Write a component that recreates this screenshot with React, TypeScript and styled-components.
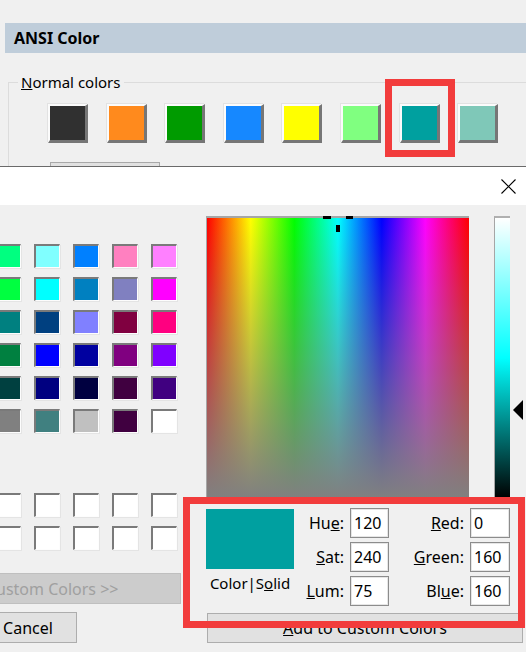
import React from 'react'
import styled, { createGlobalStyle } from 'styled-components'

const GlobalStyle = createGlobalStyle`
  html, body {
    margin: 0;
    padding: 0;
    background: #f0f0f0;
  }
  body {
    width: 526px;
    height: 652px;
    overflow: hidden;
    font-family: "Noto Sans", "Open Sans", sans-serif;
    color: #000;
  }
`

const Screen = styled.div`
  position: relative;
  width: 526px;
  height: 652px;
  overflow: hidden;
`

/* ---------- settings page behind the dialog ---------- */

const SettingsPage = styled.div`
  height: 166px;
  box-sizing: border-box;
  padding-top: 23px;
  overflow: hidden;
  background: #f0f0f0;
`

const SectionHeader = styled.div`
  margin-left: 5px;
  height: 30px;
  line-height: 30px;
  padding-left: 9px;
  background: #bfcdda;
  font-size: 16px;
  font-weight: 700;
`

const GroupBox = styled.fieldset`
  margin: 19px 0 0 8px;
  padding: 0;
  min-width: 0;
  height: 200px;
  border: 1px solid #dcdcdc;
  border-right: none;
`

const GroupLegend = styled.legend`
  margin-left: 9px;
  padding: 0 3px;
  font-size: 15px;
  line-height: 20px;
`

const SwatchRow = styled.div`
  display: flex;
  gap: 18.6px;
  margin: 12px 0 0 39px;
`

const RaisedSwatch = styled.div<{ $color: string }>`
  width: 40px;
  height: 39px;
  box-sizing: border-box;
  background: ${p => p.$color};
  border-style: solid;
  border-width: 2px 3px 3px 2px;
  border-color: #fbfbfb #767676 #767676 #fbfbfb;
  box-shadow: -1px -1px 0 #e2e2e2;
`

const PageButton = styled.div`
  margin: 19px 0 0 41px;
  width: 108px;
  height: 28px;
  background: #e1e1e1;
  border: 1px solid #a8a8a8;
`

/* ---------- colour dialog ---------- */

const Dialog = styled.div`
  border-top: 1px solid #6a6a6a;
  background: #f0f0f0;
  height: 485px;
`

const TitleBar = styled.div`
  height: 38px;
  background: #fff;
  display: flex;
  justify-content: flex-end;
  align-items: center;
  padding-right: 10px;
`

const DialogBody = styled.div`
  display: flex;
  align-items: flex-start;
`

const LeftPanel = styled.div`
  flex: none;
  width: 311px;
  margin-left: -130px;
  padding-top: 39px;
  display: flex;
  flex-direction: column;
`

const CellGrid = styled.div<{ $top?: number }>`
  display: grid;
  grid-template-columns: repeat(8, 26px);
  grid-auto-rows: 24px;
  column-gap: 13px;
  row-gap: 9px;
  padding-left: 8px;
  margin-top: ${p => p.$top ?? 0}px;
`

const SunkenCell = styled.div<{ $color: string }>`
  box-sizing: border-box;
  background: ${p => p.$color};
  border-style: solid;
  border-width: 2px 1px 1px 2px;
  border-color: #7a7a7a #fdfdfd #fdfdfd #7a7a7a;
  box-shadow: 1px 1px 0 #e4e4e4;
`

const WideButton = styled.div<{ $disabled?: boolean }>`
  margin-top: 23px;
  height: 31px;
  box-sizing: border-box;
  display: flex;
  align-items: center;
  justify-content: center;
  font-size: 16px;
  white-space: nowrap;
  background: ${p => (p.$disabled ? '#cccccc' : '#e1e1e1')};
  border: 1px solid ${p => (p.$disabled ? '#bfbfbf' : '#adadad')};
  color: ${p => (p.$disabled ? '#a0a0a0' : '#000')};
`

const ButtonRow = styled.div`
  display: flex;
  gap: 8px;
  margin-top: 8px;
  padding-left: 3px;
`

const PushButton = styled.div`
  width: 98px;
  height: 31px;
  box-sizing: border-box;
  display: flex;
  align-items: center;
  justify-content: center;
  font-size: 16px;
  background: #e1e1e1;
  border: 1px solid #adadad;
`

const RightPanel = styled.div`
  margin-left: 25px;
  padding-top: 11px;
  display: flex;
  flex-direction: column;
`

const PickerRow = styled.div`
  display: flex;
  align-items: flex-start;
`

const Spectrum = styled.div`
  position: relative;
  width: 263px;
  height: 282px;
  box-sizing: border-box;
  border-top: 2px solid #a6a6a6;
  border-left: 1px solid #a6a6a6;
  background:
    linear-gradient(to bottom, rgba(128, 128, 128, 0), #808080),
    linear-gradient(to right, #ff0000, #ffff00 16.67%, #00ff00 33.33%, #00ffff 50%, #0000ff 66.67%, #ff00ff 83.33%, #ff0000);
`

const Crosshair = styled.svg`
  position: absolute;
  top: -2px;
  width: 30px;
  height: 16px;
`

const LumBar = styled.div`
  margin-left: 25px;
  width: 16px;
  height: 282px;
  box-sizing: border-box;
  border-top: 2px solid #b0b0b0;
  border-left: 1px solid #a6a6a6;
  background: linear-gradient(to bottom, #ffffff, #00ffff 50%, #000000);
`

const LumTrack = styled.div`
  position: relative;
  width: 13px;
  height: 282px;
`

const LumArrow = styled.svg`
  position: absolute;
  left: 3px;
  width: 10px;
  height: 20px;
`

const ControlsRow = styled.div`
  display: flex;
  margin-top: 10px;
`

const PreviewBlock = styled.div`
  width: 88px;
  display: flex;
  flex-direction: column;
  align-items: center;
`

const PreviewSwatch = styled.div<{ $color: string }>`
  margin-top: 1px;
  width: 88px;
  height: 60px;
  background: ${p => p.$color};
`

const PreviewLabel = styled.div`
  margin-top: 4px;
  font-size: 15px;
  line-height: 20px;
  white-space: nowrap;
`

const FieldGrid = styled.div`
  display: grid;
  grid-template-columns: 44px 39px 69px 40px;
  grid-auto-rows: 30px;
  column-gap: 6px;
  row-gap: 4px;
  margin-left: 6px;
`

const FieldLabel = styled.div`
  display: flex;
  align-items: center;
  justify-content: flex-end;
  font-size: 16px;
  white-space: nowrap;
`

const FieldBox = styled.div`
  box-sizing: border-box;
  display: flex;
  align-items: center;
  padding-left: 3px;
  font-size: 16px;
  background: #fff;
  border: 1px solid #8c8c8c;
  box-shadow: inset 0 0 0 1px #e6e6e6;
`

const AddButton = styled.div`
  margin: 7px 0 0 1px;
  width: 316px;
  height: 30px;
  box-sizing: border-box;
  display: flex;
  align-items: center;
  justify-content: center;
  font-size: 16px;
  background: #e1e1e1;
  border: 1px solid #adadad;
`

/* ---------- red annotation frames ---------- */

const Highlight = styled.div<{ $x: number; $y: number; $w: number; $h: number }>`
  position: absolute;
  left: ${p => p.$x}px;
  top: ${p => p.$y}px;
  width: ${p => p.$w}px;
  height: ${p => p.$h}px;
  box-sizing: border-box;
  border: 7px solid #f23c3c;
  pointer-events: none;
`

const normalColors = ['#303030', '#ff8a1d', '#009b00', '#1688ff', '#ffff00', '#80ff80', '#00a09f', '#7fc8b8']

const basicColors = [
  '#ff8080', '#ffff80', '#80ff80', '#00ff80', '#80ffff', '#0080ff', '#ff80c0', '#ff80ff',
  '#ff0000', '#ffff00', '#80ff00', '#00ff40', '#00ffff', '#0080c0', '#8080c0', '#ff00ff',
  '#804040', '#ff8040', '#00ff00', '#008080', '#004080', '#8080ff', '#800040', '#ff0080',
  '#800000', '#ff8000', '#008000', '#008040', '#0000ff', '#0000a0', '#800080', '#8000ff',
  '#400000', '#804000', '#004000', '#004040', '#000080', '#000040', '#400040', '#400080',
  '#000000', '#808000', '#808040', '#808080', '#408080', '#c0c0c0', '#400040', '#ffffff',
]

const customColors = Array.from({ length: 16 }, () => '#ffffff')

const hue = 120
const lum = 75

function App() {
  const crossX = Math.round((hue / 240) * 263) - 16
  const arrowY = Math.round(282 - (lum / 240) * 282) - 10

  return (
    <Screen>
      <GlobalStyle />

      <SettingsPage>
        <SectionHeader>ANSI Color</SectionHeader>
        <GroupBox>
          <GroupLegend><u>N</u>ormal colors</GroupLegend>
          <SwatchRow>
            {normalColors.map((c, i) => (
              <RaisedSwatch key={i} $color={c} />
            ))}
          </SwatchRow>
          <PageButton />
        </GroupBox>
      </SettingsPage>

      <Dialog>
        <TitleBar>
          <svg width="15" height="15" viewBox="0 0 15 15">
            <path d="M0.5 0.5 L14.5 14.5 M14.5 0.5 L0.5 14.5" stroke="#000" strokeWidth="1.1" fill="none" />
          </svg>
        </TitleBar>

        <DialogBody>
          <LeftPanel>
            <CellGrid>
              {basicColors.map((c, i) => (
                <SunkenCell key={i} $color={c} />
              ))}
            </CellGrid>
            <CellGrid $top={60}>
              {customColors.map((c, i) => (
                <SunkenCell key={i} $color={c} />
              ))}
            </CellGrid>
            <WideButton $disabled>Define Custom Colors &gt;&gt;</WideButton>
            <ButtonRow>
              <PushButton>OK</PushButton>
              <PushButton>Cancel</PushButton>
            </ButtonRow>
          </LeftPanel>

          <RightPanel>
            <PickerRow>
              <Spectrum>
                <Crosshair style={{ left: crossX }} viewBox="0 0 30 16">
                  <rect x="0" y="0" width="8" height="3" fill="#000" />
                  <rect x="23" y="0" width="7" height="3" fill="#000" />
                  <rect x="13" y="9" width="4" height="7" fill="#000" />
                </Crosshair>
              </Spectrum>
              <LumBar />
              <LumTrack>
                <LumArrow style={{ top: arrowY }} viewBox="0 0 10 20">
                  <polygon points="10,0 10,20 0,10" fill="#000" />
                </LumArrow>
              </LumTrack>
            </PickerRow>

            <ControlsRow>
              <PreviewBlock>
                <PreviewSwatch $color="#00a0a0" />
                <PreviewLabel>Color|S<u>o</u>lid</PreviewLabel>
              </PreviewBlock>
              <FieldGrid>
                <FieldLabel>Hu<u>e</u>:</FieldLabel>
                <FieldBox>120</FieldBox>
                <FieldLabel><u>R</u>ed:</FieldLabel>
                <FieldBox>0</FieldBox>

                <FieldLabel><u>S</u>at:</FieldLabel>
                <FieldBox>240</FieldBox>
                <FieldLabel><u>G</u>reen:</FieldLabel>
                <FieldBox>160</FieldBox>

                <FieldLabel><u>L</u>um:</FieldLabel>
                <FieldBox>75</FieldBox>
                <FieldLabel>Bl<u>u</u>e:</FieldLabel>
                <FieldBox>160</FieldBox>
              </FieldGrid>
            </ControlsRow>

            <AddButton><u>A</u>dd to Custom Colors</AddButton>
          </RightPanel>
        </DialogBody>
      </Dialog>

      <Highlight $x={385} $y={79} $w={70} $h={78} />
      <Highlight $x={183} $y={497} $w={342} $h={131} />
    </Screen>
  )
}

export default App
